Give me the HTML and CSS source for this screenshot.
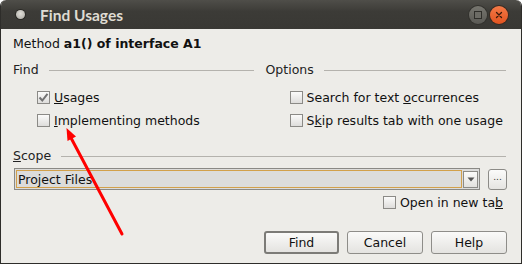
FILE: index.html
```html
<!DOCTYPE html>
<html lang="en">
<head>
    <meta charset="UTF-8">
    <title>Find Usages</title>
    <link rel="stylesheet" href="styles.css">
</head>
<body>
    <div class="window">
        <!-- Barre de titre -->
        <div class="titlebar">
            <span class="title-dot"></span>
            <span class="title">Find Usages</span>
            <span class="win-btn win-max"><span class="max-square"></span></span>
            <span class="win-btn win-close">
                <svg viewBox="0 0 10 10"><path d="M2.5 2.5 L7.5 7.5 M7.5 2.5 L2.5 7.5" stroke="#3a1a0a" stroke-width="1.3" stroke-linecap="round"/></svg>
            </span>
        </div>

        <div class="content">
            <div class="method">Method <b>a1() of interface A1</b></div>

            <div class="groups">
                <div class="group">
                    <div class="sep"><span>Find</span><i></i></div>
                    <div class="checks">
                        <label class="check"><span class="box checked">
                            <svg viewBox="0 0 11 11"><path d="M1.5 5.5 L4.3 8.5 L9.5 1.8" fill="none" stroke="#737373" stroke-width="2"/></svg>
                        </span><span><u>U</u>sages</span></label>
                        <label class="check"><span class="box"></span><span><u>I</u>mplementing methods</span></label>
                    </div>
                </div>
                <div class="group">
                    <div class="sep"><span>Options</span><i></i></div>
                    <div class="checks">
                        <label class="check"><span class="box"></span><span>Search for text <u>o</u>ccurrences</span></label>
                        <label class="check"><span class="box"></span><span>S<u>k</u>ip results tab with one usage</span></label>
                    </div>
                </div>
            </div>

            <div class="sep scope"><span><u>S</u>cope</span><i></i></div>

            <div class="scope-row">
                <div class="combo">
                    <div class="combo-field">Project Files</div>
                    <div class="combo-arrow">
                        <svg viewBox="0 0 8 5"><path d="M0.5 0.5 L7.5 0.5 L4 4.5 Z" fill="#555"/></svg>
                    </div>
                </div>
                <div class="more-btn">...</div>
            </div>

            <div class="newtab">
                <label class="check"><span class="box"></span><span>Open in new ta<u>b</u></span></label>
            </div>

            <div class="buttons">
                <div class="btn default">Find</div>
                <div class="btn">Cancel</div>
                <div class="btn">Help</div>
            </div>
        </div>

        <!-- Flèche d'annotation -->
        <svg class="arrow" viewBox="0 0 522 264" width="522" height="264">
            <line x1="122" y1="234" x2="70" y2="136" stroke="#f00" stroke-width="3" stroke-linecap="round"/>
            <polygon points="66.5,128 76,136.5 67.5,141" fill="#f00"/>
        </svg>
    </div>
</body>
</html>
```

FILE: styles.css
```css
* {
    margin: 0;
    padding: 0;
    box-sizing: border-box;
}

body {
    background: #fff;
    font-family: 'DejaVu Sans', sans-serif;
    font-size: 12.5px;
    color: #111;
}

.window {
    position: relative;
    width: 522px;
    height: 264px;
    background: #edece8;
    border: 1px solid #2e2d2a;
    border-top: none;
    border-radius: 6px 6px 0 0;
    overflow: hidden;
}

/* Title bar */
.titlebar {
    height: 29px;
    margin: 0 -1px;
    display: flex;
    align-items: center;
    background: linear-gradient(#4f4e49, #3c3b37 40%, #393834);
    border-radius: 6px 6px 0 0;
}

.title-dot {
    width: 9px;
    height: 9px;
    margin-left: 16px;
    border-radius: 50%;
    background: radial-gradient(circle at 50% 40%, #e0ded8, #a8a6a0);
    box-shadow: 0 0 0 1px #2a2925;
}

.title {
    margin-left: 15px;
    font-family: 'Lato', sans-serif;
    font-weight: bold;
    font-size: 15.5px;
    color: #dfdbd2;
    flex: 1;
}

.win-btn {
    width: 18px;
    height: 18px;
    border-radius: 50%;
    display: flex;
    align-items: center;
    justify-content: center;
}

.win-max {
    background: linear-gradient(#77766f, #5a5954);
    box-shadow: 0 0 0 1px #33322e;
    margin-right: 3px;
}

.max-square {
    width: 8px;
    height: 8px;
    border: 1px solid #2f2e2a;
    background: #6c6b65;
}

.win-close {
    background: linear-gradient(#f47a47, #e2531f);
    box-shadow: 0 0 0 1px #3a2a20;
    margin-right: 14px;
}

.win-close svg {
    width: 10px;
    height: 10px;
}

/* Content */
.content {
    padding: 7px 14px 0 12px;
}

.method {
    line-height: 16px;
}

.groups {
    display: grid;
    grid-template-columns: minmax(0, 1fr) minmax(0, 1fr);
    column-gap: 11px;
    margin-top: 10px;
}

.sep {
    display: flex;
    align-items: center;
    line-height: 16px;
    color: #222;
    gap: 10px;
}

.sep i {
    flex: 1;
    height: 1px;
    background: #b4b2ad;
    margin-right: 1px;
}

.checks {
    padding: 10px 0 0 24px;
    display: flex;
    flex-direction: column;
    gap: 5px;
}

.check {
    display: flex;
    align-items: center;
    height: 18px;
    gap: 4px;
    white-space: nowrap;
}

.box {
    width: 13px;
    height: 13px;
    flex: none;
    border: 1px solid #8b8a86;
    background: linear-gradient(#fbfbfa, #dedddb);
    display: flex;
    align-items: center;
    justify-content: center;
}

.box svg {
    width: 11px;
    height: 11px;
}

.scope {
    margin-top: 19px;
}

.scope-row {
    display: flex;
    align-items: center;
    margin-top: 4px;
    gap: 8px;
}

.combo {
    flex: 1;
    height: 22px;
    margin-left: 1px;
    border: 1px solid #8a8985;
    background: #dcdcdb;
    display: flex;
    align-items: center;
    padding: 1px;
}

.combo-field {
    flex: 1;
    height: 100%;
    border: 1px solid #d2a04a;
    line-height: 17px;
    padding-left: 1px;
    font-size: 12.5px;
    color: #111;
}

.combo-arrow {
    width: 15px;
    height: 17px;
    margin-left: 1px;
    border: 1px solid #8c8b87;
    background: linear-gradient(#fbfbfa, #e2e1de);
    display: flex;
    align-items: center;
    justify-content: center;
}

.combo-arrow svg {
    width: 8px;
    height: 5px;
}

.more-btn {
    width: 19px;
    height: 21px;
    border: 1px solid #8c8b87;
    border-radius: 3px;
    background: linear-gradient(#fbfbfa, #e5e4e1);
    font-size: 9px;
    line-height: 15px;
    text-align: center;
    color: #333;
}

.newtab {
    display: flex;
    justify-content: flex-end;
    margin-top: 3px;
    padding-right: 4px;
}

.buttons {
    display: flex;
    justify-content: flex-end;
    gap: 8px;
    margin-top: 20px;
}

.btn {
    width: 76px;
    height: 23px;
    border: 1px solid #8e8d89;
    border-radius: 3px;
    background: linear-gradient(#fafaf9, #e4e3e0);
    text-align: center;
    line-height: 21px;
    color: #111;
}

.btn.default {
    border: 2px solid #7c7b77;
    line-height: 19px;
    width: 75px;
}

.arrow {
    position: absolute;
    left: -1px;
    top: 0;
    pointer-events: none;
}
```
